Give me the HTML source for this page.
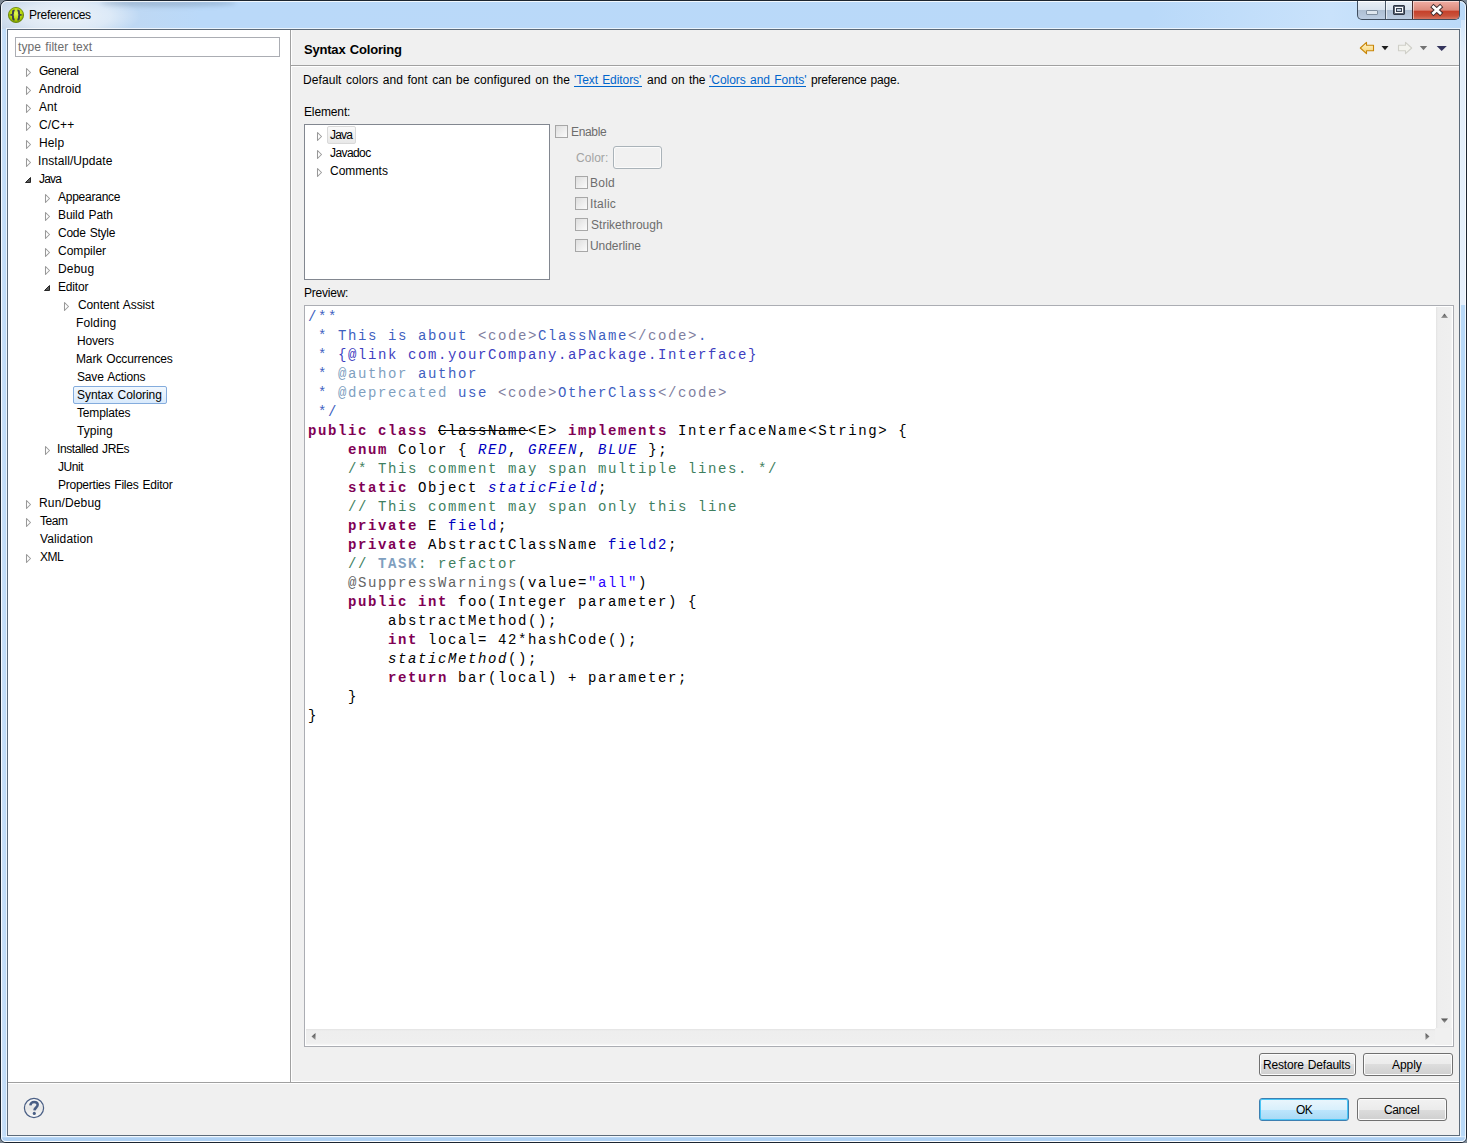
<!DOCTYPE html><html><head><meta charset="utf-8"><style>
*{margin:0;padding:0;box-sizing:border-box}
html,body{width:1467px;height:1143px;overflow:hidden;background:#b9d9f8}
body{position:relative;font-family:"Liberation Sans",sans-serif;font-size:12px;color:#000}
.a{position:absolute}
.t{position:absolute;font-family:"Liberation Sans",sans-serif;font-size:12px;word-spacing:1px;letter-spacing:-0.2px;white-space:pre;line-height:14px}
.code{position:absolute;left:308px;font-family:"Liberation Mono",monospace;font-size:14px;letter-spacing:1.6px;white-space:pre;line-height:19px}
.btn{position:absolute;height:23px;border:1px solid #707070;border-radius:3px;
 background:linear-gradient(#f2f2f2 0,#ebebeb 50%,#dddddd 50%,#cfcfcf 100%);box-shadow:inset 0 0 0 1px #fcfcfc}
.cb{position:absolute;width:13px;height:13px;border:1px solid #a7a7a7;background:linear-gradient(135deg,#dedede,#fbfbfb)}
.dis{color:#6d6d6d}
svg{position:absolute;overflow:visible}
</style></head><body>
<div class="a" style="left:0;top:0;width:1467px;height:1143px;background:#7d8894"></div>
<div class="a" style="left:0;top:0;width:1467px;height:1143px;border:1px solid #1c2530;border-radius:7px 7px 6px 6px;overflow:hidden;background:linear-gradient(90deg,#c6d6e8 0,#bad9f9 200px,#b9d9f9 1150px,#c9e2fb 1330px,#bad9f8 1467px)"><div class="a" style="left:-10px;top:-8px;width:150px;height:46px;border-radius:50%;background:radial-gradient(closest-side,rgba(255,255,255,.7),rgba(255,255,255,.45) 60%,rgba(255,255,255,0))"></div><div class="a" style="left:100px;top:-2px;width:135px;height:8px;border-radius:50%;background:rgba(70,90,120,.22);filter:blur(2px)"></div><div class="a" style="left:0;top:28px;width:1467px;height:1115px;background:linear-gradient(90deg,#cfe2f7 0,#b9d9f8 6px)"></div></div>
<div class="a" style="left:1461px;top:20px;width:5px;height:285px;background:linear-gradient(#d2e6fb,#e3eefa 30px,#e6f0fb)"></div>
<div class="a" style="left:1px;top:1136px;width:1465px;height:6px;background:linear-gradient(#dff0ff,#aed0f3 2px,#aed0f3 5px,#f4f9ff 5px);border-radius:0 0 5px 5px"></div>
<div class="a" style="left:1px;top:1px;width:1465px;height:1141px;border:1px solid rgba(255,255,255,.8);border-radius:6px 6px 5px 5px"></div>
<div class="a" style="left:6px;top:28px;width:1455px;height:1109px;border:1px solid rgba(255,255,255,.7)"></div>
<div class="a" style="left:7px;top:29px;width:1453px;height:1107px;border:1px solid #5d6b7a;background:#f0f0f0"></div>
<div class="a" style="left:8px;top:30px;width:282px;height:1052px;background:#fff"></div>
<div class="a" style="left:290px;top:30px;width:1px;height:1052px;background:#a0a0a0"></div>
<div class="a" style="left:8px;top:1082px;width:1451px;height:1px;background:#a0a0a0"></div>
<div class="a" style="left:8px;top:1083px;width:1451px;height:1px;background:#fff"></div>
<div class="a" style="left:291px;top:30px;width:1px;height:1052px;background:#fff"></div>
<div class="a" style="left:291px;top:1081px;width:1168px;height:1px;background:#fff"></div>
<svg style="left:8px;top:7px" width="16" height="16" viewBox="0 0 16 16"><defs><radialGradient id="eg" cx="50%" cy="40%" r="60%"><stop offset="0" stop-color="#e4f85a"/><stop offset=".7" stop-color="#b2d300"/><stop offset="1" stop-color="#6f9000"/></radialGradient></defs><circle cx="8" cy="8" r="7.6" fill="url(#eg)" stroke="#5f7d00" stroke-width=".8"/><path d="M6.6 3.4c-1.3 0-1.6.6-1.6 1.5v1.6c0 .8-.4 1.2-1 1.4.6.2 1 .6 1 1.4v1.6c0 .9.3 1.6 1.6 1.6M9.4 3.4c1.3 0 1.6.6 1.6 1.5v1.6c0 .8.4 1.2 1 1.4-.6.2-1 .6-1 1.4v1.6c0 .9-.3 1.6-1.6 1.6" fill="none" stroke="#3a3c50" stroke-width="1.9"/></svg>
<div class="t" style="left:29px;top:8px;letter-spacing:-0.26px">Preferences</div>
<div class="a" style="left:1357px;top:1px;width:103px;height:19px;border:1px solid #3f4d5e;border-top:none;border-radius:0 0 5px 5px;overflow:hidden;background:linear-gradient(#e9eff6 0,#d9e3ee 48%,#aebfd3 52%,#bccde2 100%);box-shadow:inset 0 1px 0 #fff"><div class="a" style="left:27px;top:0;width:1px;height:20px;background:#4a5868"></div><div class="a" style="left:28px;top:0;width:1px;height:20px;background:rgba(255,255,255,.6)"></div><div class="a" style="left:54px;top:0;width:1px;height:20px;background:#4a2a2a"></div><div class="a" style="left:55px;top:0;width:48px;height:20px;background:linear-gradient(#f0aea4 0,#dc8a7c 45%,#c6412b 52%,#c9533c 75%,#e3907e 100%);box-shadow:inset 1px 1px 0 rgba(255,255,255,.5),inset -1px 0 0 rgba(120,20,10,.5)"></div></div>
<div class="a" style="left:1366px;top:10px;width:12px;height:5px;border:1px solid #7f8e9f;background:#dfe7ef;border-radius:1px"></div>
<div class="a" style="left:1393px;top:5px;width:12px;height:10px;border:1px solid #2f3744;box-shadow:inset 0 0 0 1px #5a6474;border-radius:1px;background:#fdfdfd"></div>
<div class="a" style="left:1396px;top:8px;width:6px;height:4px;border:1px solid #3a4352;background:#b9c8d9"></div>
<svg style="left:1430px;top:4px" width="14" height="12" viewBox="0 0 14 12"><path d="M3.5 3L10 9M10 3L3.5 9" stroke="#3c2a2c" stroke-width="4.6" stroke-linecap="square"/><path d="M3.5 3L10 9M10 3L3.5 9" stroke="#fff" stroke-width="2.8" stroke-linecap="square"/></svg>
<div class="a" style="left:15px;top:37px;width:265px;height:20px;border:1px solid #abadb3;border-top-color:#abadb3;background:#fff"></div>
<div class="t" style="left:18px;top:40px;letter-spacing:0.053px;color:#6d6d6d">type filter text</div>
<svg style="left:26px;top:68px" width="6" height="10"><path d="M.5 .5L4.5 4.5L.5 8.5Z" fill="#fff" stroke="#999" stroke-width="1.05" stroke-linejoin="round"/></svg>
<div class="t" style="left:39px;top:64px;letter-spacing:-0.467px">General</div>
<svg style="left:26px;top:86px" width="6" height="10"><path d="M.5 .5L4.5 4.5L.5 8.5Z" fill="#fff" stroke="#999" stroke-width="1.05" stroke-linejoin="round"/></svg>
<div class="t" style="left:39px;top:82px;letter-spacing:0.15px">Android</div>
<svg style="left:26px;top:104px" width="6" height="10"><path d="M.5 .5L4.5 4.5L.5 8.5Z" fill="#fff" stroke="#999" stroke-width="1.05" stroke-linejoin="round"/></svg>
<div class="t" style="left:39px;top:100px;letter-spacing:0.05px">Ant</div>
<svg style="left:26px;top:122px" width="6" height="10"><path d="M.5 .5L4.5 4.5L.5 8.5Z" fill="#fff" stroke="#999" stroke-width="1.05" stroke-linejoin="round"/></svg>
<div class="t" style="left:39px;top:118px;letter-spacing:0.15px">C/C++</div>
<svg style="left:26px;top:140px" width="6" height="10"><path d="M.5 .5L4.5 4.5L.5 8.5Z" fill="#fff" stroke="#999" stroke-width="1.05" stroke-linejoin="round"/></svg>
<div class="t" style="left:39px;top:136px;letter-spacing:0.133px">Help</div>
<svg style="left:26px;top:158px" width="6" height="10"><path d="M.5 .5L4.5 4.5L.5 8.5Z" fill="#fff" stroke="#999" stroke-width="1.05" stroke-linejoin="round"/></svg>
<div class="t" style="left:38px;top:154px;letter-spacing:0.077px">Install/Update</div>
<svg style="left:25px;top:177px" width="7" height="7"><path d="M.5 5.5L5.5 5.5L5.5 .5Z" fill="#595959" stroke="#262626" stroke-width="1" stroke-linejoin="round"/></svg>
<div class="t" style="left:39px;top:172px;letter-spacing:-0.8px">Java</div>
<svg style="left:45px;top:194px" width="6" height="10"><path d="M.5 .5L4.5 4.5L.5 8.5Z" fill="#fff" stroke="#999" stroke-width="1.05" stroke-linejoin="round"/></svg>
<div class="t" style="left:58px;top:190px;letter-spacing:-0.244px">Appearance</div>
<svg style="left:45px;top:212px" width="6" height="10"><path d="M.5 .5L4.5 4.5L.5 8.5Z" fill="#fff" stroke="#999" stroke-width="1.05" stroke-linejoin="round"/></svg>
<div class="t" style="left:58px;top:208px;letter-spacing:-0.089px">Build Path</div>
<svg style="left:45px;top:230px" width="6" height="10"><path d="M.5 .5L4.5 4.5L.5 8.5Z" fill="#fff" stroke="#999" stroke-width="1.05" stroke-linejoin="round"/></svg>
<div class="t" style="left:58px;top:226px;letter-spacing:-0.256px">Code Style</div>
<svg style="left:45px;top:248px" width="6" height="10"><path d="M.5 .5L4.5 4.5L.5 8.5Z" fill="#fff" stroke="#999" stroke-width="1.05" stroke-linejoin="round"/></svg>
<div class="t" style="left:58px;top:244px;letter-spacing:0.014px">Compiler</div>
<svg style="left:45px;top:266px" width="6" height="10"><path d="M.5 .5L4.5 4.5L.5 8.5Z" fill="#fff" stroke="#999" stroke-width="1.05" stroke-linejoin="round"/></svg>
<div class="t" style="left:58px;top:262px;letter-spacing:0.175px">Debug</div>
<svg style="left:44px;top:285px" width="7" height="7"><path d="M.5 5.5L5.5 5.5L5.5 .5Z" fill="#595959" stroke="#262626" stroke-width="1" stroke-linejoin="round"/></svg>
<div class="t" style="left:58px;top:280px;letter-spacing:-0.18px">Editor</div>
<svg style="left:64px;top:302px" width="6" height="10"><path d="M.5 .5L4.5 4.5L.5 8.5Z" fill="#fff" stroke="#999" stroke-width="1.05" stroke-linejoin="round"/></svg>
<div class="t" style="left:78px;top:298px;letter-spacing:-0.108px">Content Assist</div>
<div class="t" style="left:76px;top:316px;letter-spacing:0.133px">Folding</div>
<div class="t" style="left:77px;top:334px;letter-spacing:-0.22px">Hovers</div>
<div class="t" style="left:76px;top:352px;letter-spacing:-0.147px">Mark Occurrences</div>
<div class="t" style="left:77px;top:370px;letter-spacing:-0.173px">Save Actions</div>
<div class="a" style="left:73px;top:386px;width:94px;height:18px;border:1px solid #84acdd;border-radius:2px;background:linear-gradient(#f2f8fe,#d9eafc)"></div>
<div class="t" style="left:77px;top:388px;letter-spacing:-0.064px">Syntax Coloring</div>
<div class="t" style="left:77px;top:406px;letter-spacing:-0.15px">Templates</div>
<div class="t" style="left:77px;top:424px;letter-spacing:0.06px">Typing</div>
<svg style="left:45px;top:446px" width="6" height="10"><path d="M.5 .5L4.5 4.5L.5 8.5Z" fill="#fff" stroke="#999" stroke-width="1.05" stroke-linejoin="round"/></svg>
<div class="t" style="left:57px;top:442px;letter-spacing:-0.4px">Installed JREs</div>
<div class="t" style="left:58px;top:460px;letter-spacing:-0.425px">JUnit</div>
<div class="t" style="left:58px;top:478px;letter-spacing:-0.245px">Properties Files Editor</div>
<svg style="left:26px;top:500px" width="6" height="10"><path d="M.5 .5L4.5 4.5L.5 8.5Z" fill="#fff" stroke="#999" stroke-width="1.05" stroke-linejoin="round"/></svg>
<div class="t" style="left:39px;top:496px;letter-spacing:0.15px">Run/Debug</div>
<svg style="left:26px;top:518px" width="6" height="10"><path d="M.5 .5L4.5 4.5L.5 8.5Z" fill="#fff" stroke="#999" stroke-width="1.05" stroke-linejoin="round"/></svg>
<div class="t" style="left:40px;top:514px;letter-spacing:-0.433px">Team</div>
<div class="t" style="left:40px;top:532px;letter-spacing:0.122px">Validation</div>
<svg style="left:26px;top:554px" width="6" height="10"><path d="M.5 .5L4.5 4.5L.5 8.5Z" fill="#fff" stroke="#999" stroke-width="1.05" stroke-linejoin="round"/></svg>
<div class="t" style="left:40px;top:550px;letter-spacing:-0.55px">XML</div>
<div class="a" style="left:304px;top:42px;font-weight:bold;font-size:13px;line-height:15px;white-space:pre;letter-spacing:-0.2px;word-spacing:1px">Syntax Coloring</div>
<div class="a" style="left:291px;top:65px;width:1168px;height:1px;background:#a0a0a0"></div>
<div class="a" style="left:291px;top:66px;width:1168px;height:1px;background:#fff"></div>
<svg style="left:1359px;top:41px" width="16" height="14" viewBox="0 0 16 14"><defs><linearGradient id="ag" x1="0" y1="0" x2="0" y2="1"><stop offset="0" stop-color="#fff6d2"/><stop offset="1" stop-color="#f6cf6a"/></linearGradient></defs><path d="M1.3 7L7.5 1.3V4.3H14.5V9.7H7.5V12.7Z" fill="url(#ag)" stroke="#c78508" stroke-width="1.1" stroke-linejoin="round"/></svg>
<svg style="left:1381px;top:46px" width="8" height="5"><path d="M0.5 0H7.5L4 4.2Z" fill="#1e1e1e"/></svg>
<svg style="left:1397px;top:41px" width="16" height="14" viewBox="0 0 16 14"><path d="M14.7 7L8.5 1.3V4.3H1.5V9.7H8.5V12.7Z" fill="#f3f3ee" stroke="#cfcfc8" stroke-width="1.1" stroke-linejoin="round"/></svg>
<svg style="left:1419px;top:46px" width="9" height="5"><path d="M0.8 0H8.2L4.5 4.2Z" fill="#727272"/></svg>
<svg style="left:1436px;top:46px" width="12" height="6"><path d="M0.7 0H10.8L5.7 5Z" fill="#34345c"/></svg>
<div class="t" style="left:303px;top:73px;letter-spacing:0.072px">Default colors and font can be configured on the</div>
<div class="t" style="left:574px;top:73px;letter-spacing:-0.077px;color:#0066cc">&#x27;Text Editors&#x27;</div>
<div class="a" style="left:574px;top:86px;width:68px;height:1px;background:#0066cc"></div>
<div class="t" style="left:647px;top:73px;letter-spacing:-0.022px">and on the</div>
<div class="t" style="left:709px;top:73px;letter-spacing:-0.029px;color:#0066cc">&#x27;Colors and Fonts&#x27;</div>
<div class="a" style="left:709px;top:86px;width:97px;height:1px;background:#0066cc"></div>
<div class="t" style="left:811px;top:73px;letter-spacing:-0.193px">preference page.</div>
<div class="t" style="left:304px;top:105px;letter-spacing:-0.129px">Element:</div>
<div class="a" style="left:304px;top:124px;width:246px;height:156px;border:1px solid #828790;background:#fff"></div>
<div class="a" style="left:327px;top:126px;width:29px;height:18px;border:1px solid #d9d9d9;border-radius:2px;background:linear-gradient(#fafafa,#e8e8e8)"></div>
<svg style="left:317px;top:132px" width="6" height="10"><path d="M.5 .5L4.5 4.5L.5 8.5Z" fill="#fff" stroke="#999" stroke-width="1.05" stroke-linejoin="round"/></svg>
<div class="t" style="left:330px;top:128px;letter-spacing:-0.8px">Java</div>
<svg style="left:317px;top:150px" width="6" height="10"><path d="M.5 .5L4.5 4.5L.5 8.5Z" fill="#fff" stroke="#999" stroke-width="1.05" stroke-linejoin="round"/></svg>
<div class="t" style="left:330px;top:146px;letter-spacing:-0.583px">Javadoc</div>
<svg style="left:317px;top:168px" width="6" height="10"><path d="M.5 .5L4.5 4.5L.5 8.5Z" fill="#fff" stroke="#999" stroke-width="1.05" stroke-linejoin="round"/></svg>
<div class="t" style="left:330px;top:164px;letter-spacing:-0.014px">Comments</div>
<div class="cb" style="left:555px;top:125px"></div>
<div class="t" style="left:571px;top:125px;letter-spacing:-0.34px;color:#6d6d6d">Enable</div>
<div class="t" style="left:576px;top:151px;letter-spacing:0.04px;color:#a3a3a3">Color:</div>
<div class="a" style="left:613px;top:146px;width:49px;height:23px;border:1px solid #aab3b9;border-radius:3px;background:#f1f1f1;box-shadow:inset 0 0 0 1px #fbfbfb"></div>
<div class="cb" style="left:575px;top:176px"></div>
<div class="t" style="left:590px;top:176px;letter-spacing:0.233px;color:#6d6d6d">Bold</div>
<div class="cb" style="left:575px;top:197px"></div>
<div class="t" style="left:590px;top:197px;letter-spacing:0.22px;color:#6d6d6d">Italic</div>
<div class="cb" style="left:575px;top:218px"></div>
<div class="t" style="left:591px;top:218px;letter-spacing:0.025px;color:#6d6d6d">Strikethrough</div>
<div class="cb" style="left:575px;top:239px"></div>
<div class="t" style="left:590px;top:239px;letter-spacing:-0.05px;color:#6d6d6d">Underline</div>
<div class="t" style="left:304px;top:286px;letter-spacing:-0.229px">Preview:</div>
<div class="a" style="left:304px;top:305px;width:1150px;height:742px;border:1px solid #abadb3;background:#fff"></div>
<div class="code" style="top:308px"><span style="color:#3f5fbf">/**</span>
<span style="color:#3f5fbf"> * This is about </span><span style="color:#7f7f9f">&lt;code&gt;</span><span style="color:#3f5fbf">ClassName</span><span style="color:#7f7f9f">&lt;/code&gt;</span><span style="color:#3f5fbf">.</span>
<span style="color:#3f5fbf"> * </span><span style="color:#3f3fbf">{@link com.yourCompany.aPackage.Interface}</span>
<span style="color:#3f5fbf"> * </span><span style="color:#7f9fbf">@author</span><span style="color:#3f5fbf"> author</span>
<span style="color:#3f5fbf"> * </span><span style="color:#7f9fbf">@deprecated</span><span style="color:#3f5fbf"> use </span><span style="color:#7f7f9f">&lt;code&gt;</span><span style="color:#3f5fbf">OtherClass</span><span style="color:#7f7f9f">&lt;/code&gt;</span>
<span style="color:#3f5fbf"> */</span>
<span style="color:#7f0055;font-weight:bold">public</span> <span style="color:#7f0055;font-weight:bold">class</span> <span style="text-decoration:line-through">ClassName</span>&lt;E&gt; <span style="color:#7f0055;font-weight:bold">implements</span> InterfaceName&lt;String&gt; {
    <span style="color:#7f0055;font-weight:bold">enum</span> Color { <span style="color:#0000c0;font-style:italic">RED</span>, <span style="color:#0000c0;font-style:italic">GREEN</span>, <span style="color:#0000c0;font-style:italic">BLUE</span> };
    <span style="color:#3f7f5f">/* This comment may span multiple lines. */</span>
    <span style="color:#7f0055;font-weight:bold">static</span> Object <span style="color:#0000c0;font-style:italic">staticField</span>;
    <span style="color:#3f7f5f">// This comment may span only this line</span>
    <span style="color:#7f0055;font-weight:bold">private</span> E <span style="color:#0000c0">field</span>;
    <span style="color:#7f0055;font-weight:bold">private</span> AbstractClassName <span style="color:#0000c0">field2</span>;
    <span style="color:#3f7f5f">// </span><span style="color:#7f9fbf;font-weight:bold">TASK</span><span style="color:#3f7f5f">: refactor</span>
    <span style="color:#646464">@SuppressWarnings</span>(value=<span style="color:#2a00ff">&quot;all&quot;</span>)
    <span style="color:#7f0055;font-weight:bold">public</span> <span style="color:#7f0055;font-weight:bold">int</span> foo(Integer parameter) {
        abstractMethod();
        <span style="color:#7f0055;font-weight:bold">int</span> local= 42*hashCode();
        <span style="font-style:italic">staticMethod</span>();
        <span style="color:#7f0055;font-weight:bold">return</span> bar(local) + parameter;
    }
}</div>
<div class="a" style="left:1436px;top:307px;width:16px;height:721px;background:linear-gradient(90deg,#e3e3e3 0,#eeeeee 2px,#efefef 14px,#f7f7f7 16px)"></div>
<svg style="left:1441px;top:313px" width="8" height="6"><defs><linearGradient id="sg" x1="0" y1="0" x2="0" y2="1"><stop offset="0" stop-color="#4d4d4d"/><stop offset="1" stop-color="#a0a0a0"/></linearGradient></defs><path d="M0 5L3.5 0.5L7 5Z" fill="url(#sg)"/></svg>
<svg style="left:1441px;top:1018px" width="8" height="6"><path d="M0 0.5L7 0.5L3.5 5Z" fill="url(#sg)"/></svg>
<div class="a" style="left:306px;top:1029px;width:1129px;height:16px;background:linear-gradient(#e3e3e3 0,#eeeeee 2px,#efefef 14px,#f7f7f7 16px)"></div>
<div class="a" style="left:1435px;top:1028px;width:17px;height:17px;background:#f0f0f0"></div>
<svg style="left:311px;top:1033px" width="6" height="8"><path d="M4.5 0L0.5 3.5L4.5 7Z" fill="url(#sg)"/></svg>
<svg style="left:1425px;top:1033px" width="6" height="8"><path d="M0.5 0L4.5 3.5L0.5 7Z" fill="url(#sg)"/></svg>
<div class="btn" style="left:1259px;top:1053px;width:97px"></div>
<div class="t" style="left:1263px;top:1058px;letter-spacing:-0.193px">Restore Defaults</div>
<div class="btn" style="left:1363px;top:1053px;width:90px"></div>
<div class="t" style="left:1392px;top:1058px;letter-spacing:-0.05px">Apply</div>
<div class="a" style="left:1259px;top:1098px;width:90px;height:23px;border:1px solid #3c7fb1;border-radius:3px;background:linear-gradient(#eaf6fd 0,#d9f0fc 50%,#bee6fd 50%,#a7d9f5 100%);box-shadow:inset 0 0 0 1px #48c6f7"></div>
<div class="t" style="left:1296px;top:1103px;letter-spacing:-0.6px">OK</div>
<div class="btn" style="left:1357px;top:1098px;width:90px"></div>
<div class="t" style="left:1384px;top:1103px;letter-spacing:-0.36px">Cancel</div>
<svg style="left:23px;top:1097px" width="22" height="22" viewBox="0 0 22 22"><defs><linearGradient id="hg" x1="0" y1="0" x2="0" y2="1"><stop offset="0" stop-color="#fdfdfd"/><stop offset=".5" stop-color="#e6e6e6"/><stop offset="1" stop-color="#fafafa"/></linearGradient></defs><circle cx="11" cy="11" r="9.6" fill="url(#hg)" stroke="#4a5f85" stroke-width="1.2"/><path d="M7.3 8.4C7.7 6 9.2 4.9 11.1 4.9 13.3 4.9 14.7 6.2 14.7 7.8 14.7 10.3 11.7 10.6 11.4 13.4" fill="none" stroke="#4a5f85" stroke-width="2.5"/><circle cx="11.3" cy="16.4" r="1.55" fill="#4a5f85"/></svg>
</body></html>
